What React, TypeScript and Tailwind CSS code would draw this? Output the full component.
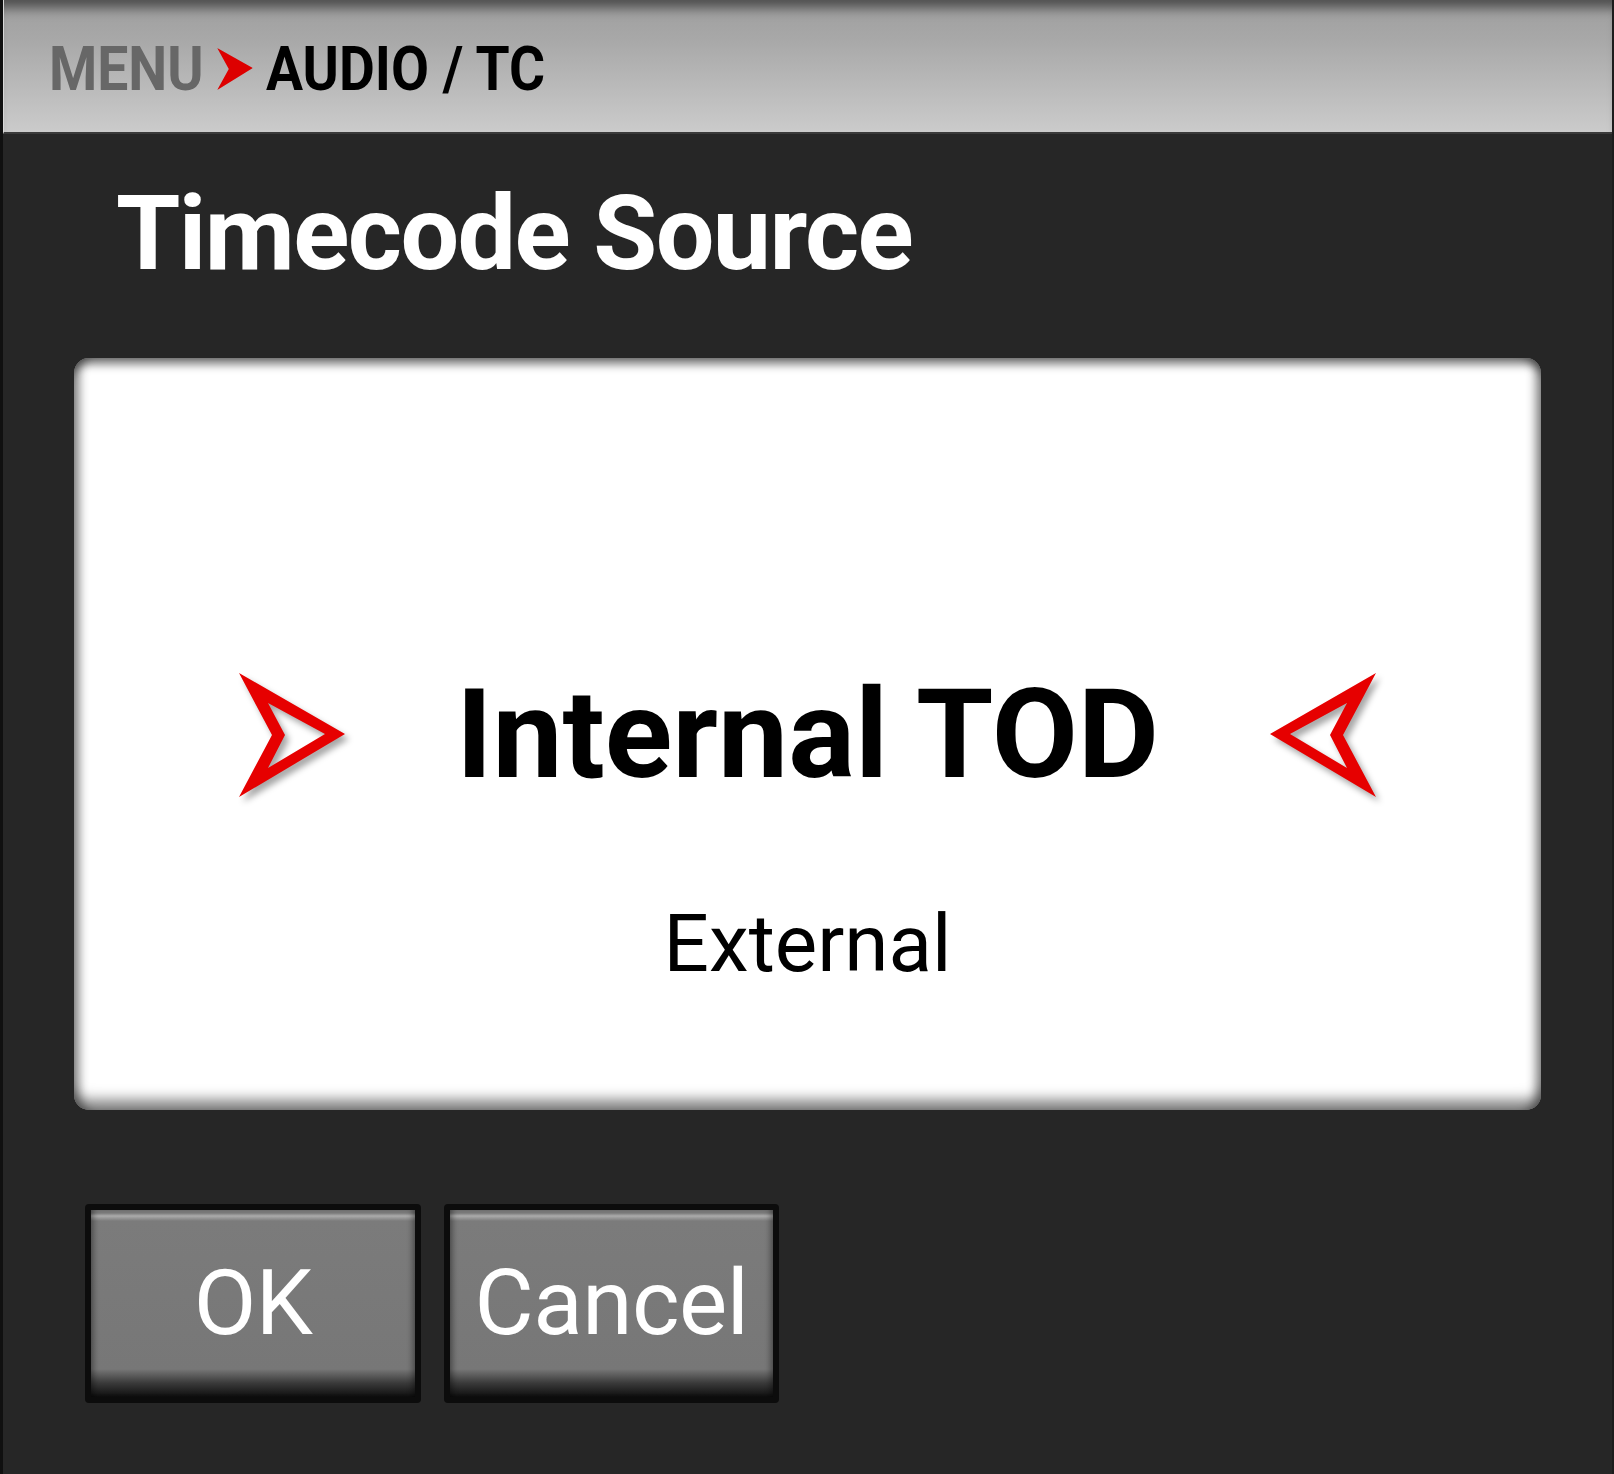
import React from "react";

function BigArrow({ dir }: { dir: "right" | "left" }) {
  const d =
    dir === "right"
      ? "M0 0 L106 61 L0 124 L33 62 Z M29 30 L46 62 L29 95 L86 61 Z"
      : "M106 0 L0 61 L106 124 L73 62 Z M77 30 L60 62 L77 95 L20 61 Z";
  return (
    <svg
      width="106"
      height="124"
      viewBox="0 0 106 124"
      className="shrink-0 drop-shadow-[4px_5px_3px_rgba(0,0,0,0.35)]"
    >
      <path d={d} fill="#e60000" fillRule="evenodd" />
    </svg>
  );
}

function Button({ label, w }: { label: string; w: string }) {
  return (
    <div className={`${w} h-[199px] rounded-[4px] bg-[#0c0c0c] p-[6px]`}>
      <div className="flex h-full w-full items-center justify-center bg-[linear-gradient(to_bottom,#7a7a7a_0px,#7a7a7a_3px,#ababab_6px,#7b7b7b_11px,#777777_calc(100%_-_28px),#3a3a3a_calc(100%_-_14px),#0e0e0e_100%)] shadow-[inset_6px_0_6px_-4px_rgba(0,0,0,0.45),inset_-6px_0_6px_-4px_rgba(0,0,0,0.45)]">
        <span className="text-[91px] leading-none font-normal text-white tracking-[-0.5px]">{label}</span>
      </div>
    </div>
  );
}

export default function App() {
  return (
    <div className="w-[1614px] h-[1474px] overflow-hidden bg-[#262626] border-l-[3px] border-l-[#101010] border-r-[2px] border-r-[#1c1c1c] font-[Roboto,sans-serif]">
      <div className="h-[134px] border-l border-l-[#d8d8d8] border-b-2 border-b-[#3a3a3a] bg-[linear-gradient(to_bottom,#9e9e9e_0%,#a8a8a8_30%,#cbcbcb_100%)] shadow-[inset_0_16px_12px_-8px_rgba(0,0,0,0.5)] pl-[45px] pt-[38px]">
        <div className="flex origin-left scale-x-[0.89] items-center text-[62px] leading-none font-bold">
          <span className="text-[#676767]">MENU</span>
          <svg width="40" height="42" viewBox="0 0 40 42" className="mx-[15px] shrink-0">
            <path d="M0 0 L40 20 L0 42 L13 21 Z" fill="#dd0000" />
          </svg>
          <span className="text-black">AUDIO / TC</span>
        </div>
      </div>

      <div className="mt-[48px] pl-[113px] text-[104px] leading-none font-bold text-white tracking-[-1.6px]">
        Timecode Source
      </div>

      <div className="mt-[72px] ml-[71px] w-[1467px] h-[752px] rounded-[15px] bg-white shadow-[inset_0_-16px_14px_-6px_rgba(0,0,0,0.5),inset_0_12px_10px_-6px_rgba(0,0,0,0.55),inset_12px_0_10px_-6px_rgba(0,0,0,0.4),inset_-12px_0_10px_-6px_rgba(0,0,0,0.4)] flex flex-col pt-[314px]">
        <div className="flex items-center justify-between px-[165px]">
          <BigArrow dir="right" />
          <span className="text-[125px] leading-none font-bold text-black">Internal TOD</span>
          <BigArrow dir="left" />
        </div>
        <div className="mt-[107px] text-center text-[80px] leading-none font-normal text-black">
          External
        </div>
      </div>

      <div className="mt-[94px] ml-[82px] flex gap-[23px]">
        <Button label="OK" w="w-[336px]" />
        <Button label="Cancel" w="w-[335px]" />
      </div>
    </div>
  );
}
